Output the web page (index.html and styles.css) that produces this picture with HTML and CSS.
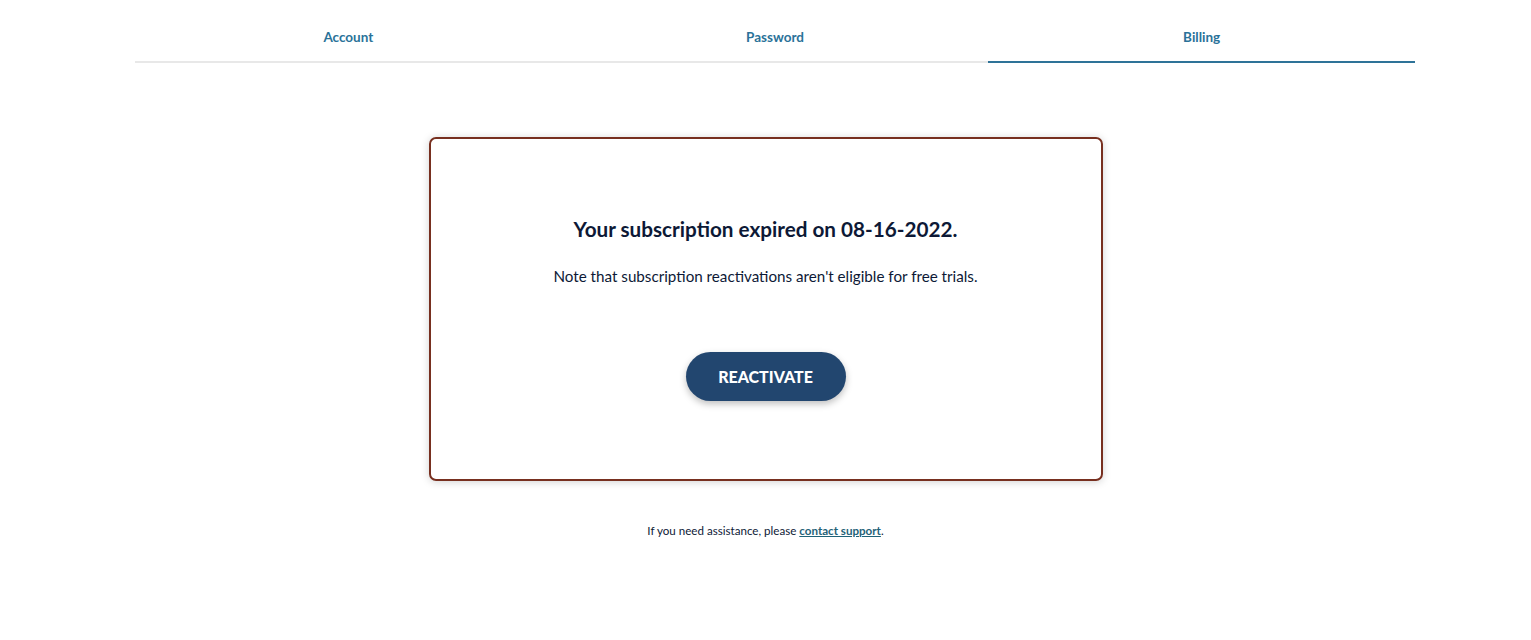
FILE: index.html
```html
<!DOCTYPE html>
<html lang="en">
<head>
<meta charset="utf-8">
<title>Billing</title>
<link rel="stylesheet" href="styles.css">
</head>
<body>
<div class="page">
  <nav class="tabs">
    <a class="tab" href="#">Account</a>
    <a class="tab" href="#">Password</a>
    <a class="tab active" href="#">Billing</a>
  </nav>
  <main class="content">
    <section class="card">
      <h1 class="card-title">Your subscription expired on 08-16-2022.</h1>
      <p class="card-note">Note that subscription reactivations aren't eligible for free trials.</p>
      <button class="btn" type="button">REACTIVATE</button>
    </section>
    <p class="help">If you need assistance, please <a href="#" class="help-link">contact support</a>.</p>
  </main>
</div>
</body>
</html>
```

FILE: styles.css
```css
* { box-sizing: border-box; }
html, body { margin: 0; padding: 0; background: #fff; }
body {
  font-family: Lato, "Liberation Sans", sans-serif;
  color: #0d1936;
}
.page {
  width: 1531px;
  height: 640px;
}
.tabs {
  display: grid;
  grid-template-columns: 1fr 1fr 1fr;
  width: 1280px;
  margin-left: 135px;
  border-bottom: 2px solid #e8e8e8;
}
.tab {
  display: flex;
  justify-content: center;
  align-items: center;
  height: 63px;
  padding-top: 14px;
  padding-bottom: 2px;
  margin-bottom: -2px;
  font-size: 13.5px;
  font-weight: 700;
  color: #2a7299;
  text-decoration: none;
  border-bottom: 2px solid transparent;
}
.tab.active { border-bottom-color: #2e7398; }
.content {
  display: flex;
  flex-direction: column;
  align-items: center;
  padding-top: 74px;
}
.card {
  width: 674px;
  height: 344px;
  border: 2px solid #772f1f;
  border-radius: 7px;
  box-shadow: 0 1px 8px rgba(0,0,0,0.18);
  display: flex;
  flex-direction: column;
  align-items: center;
  padding-top: 75px;
}
.card-title {
  margin: 0;
  font-size: 20.7px;
  line-height: 30px;
  font-weight: 700;
  color: #0d1936;
}
.card-note {
  margin: 21px 0 0;
  font-size: 15.2px;
  line-height: 22px;
  color: #0d1936;
}
.btn {
  margin-top: 65px;
  width: 160px;
  height: 49px;
  border: none;
  border-radius: 25px;
  background: #22466f;
  color: #fff;
  font-family: Lato, "Liberation Sans", sans-serif;
  font-size: 16px;
  font-weight: 900;
  box-shadow: 0 3px 7px rgba(0,0,0,0.25);
  cursor: pointer;
}
.help {
  margin: 42px 0 0;
  font-size: 11.6px;
  line-height: 16px;
  color: #0d1936;
}
.help-link {
  color: #1f6278;
  font-weight: 700;
}
```
